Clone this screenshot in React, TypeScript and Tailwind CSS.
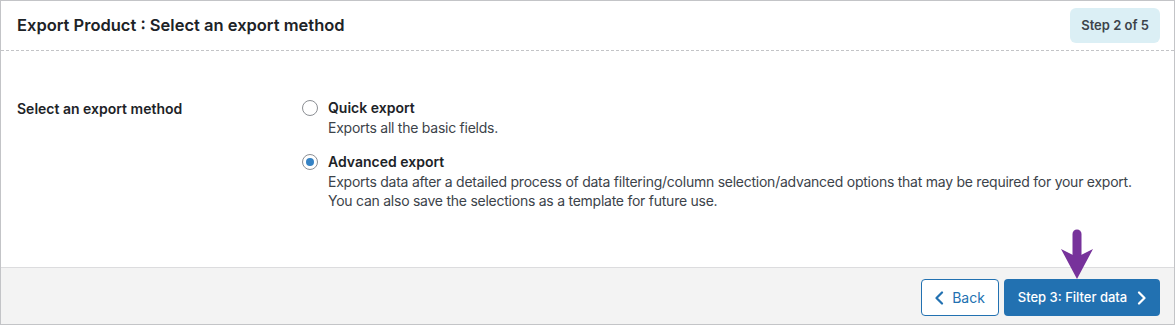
const font = { fontFamily: "Inter, 'Noto Sans', sans-serif" };

function Chevron({ dir }: { dir: "left" | "right" }) {
  return (
    <svg width="9" height="14" viewBox="0 0 9 14" fill="none" stroke="currentColor" strokeWidth="2.2" strokeLinecap="round" strokeLinejoin="round">
      {dir === "right" ? <polyline points="2,1.5 7.5,7 2,12.5" /> : <polyline points="7,1.5 1.5,7 7,12.5" />}
    </svg>
  );
}

function Radio({ checked }: { checked?: boolean }) {
  return (
    <span className="mt-[2px] grid h-4 w-4 shrink-0 place-items-center rounded-full border border-[#8c8f94] bg-white">
      {checked && <span className="h-2 w-2 rounded-full bg-[#3582c4]" />}
    </span>
  );
}

function Option({
  title,
  children,
  checked,
}: {
  title: string;
  children: React.ReactNode;
  checked?: boolean;
}) {
  return (
    <label className="flex gap-[10px]">
      <Radio checked={checked} />
      <div>
        <div className="text-sm font-semibold leading-5 text-[#1d2327]">{title}</div>
        <div className="text-sm leading-[19px] tracking-[-0.25px] text-[#3c434a]">{children}</div>
      </div>
    </label>
  );
}

export default function App() {
  return (
    <div className="relative h-[325px] w-[1175px] bg-white" style={font}>
      <div className="flex h-full flex-col border border-[#c3c4c7]">
        {/* header */}
        <div className="flex h-[50px] items-center justify-between border-b border-dashed border-[#c3c4c7] pl-4 pr-[14px]">
          <h2 className="text-[16.5px] font-semibold text-[#1d2327]">
            Export Product : Select an export method
          </h2>
          <span className="rounded-md bg-[#dbeff5] px-[11px] py-[8px] text-[13px] font-semibold text-[#3c434a]">
            Step 2 of 5
          </span>
        </div>

        {/* body */}
        <div className="flex flex-1 pl-4 pt-[47px]">
          <div className="w-[285px] pt-[1px] text-sm font-semibold leading-5 text-[#1d2327]">
            Select an export method
          </div>
          <div className="flex flex-col gap-[15px]">
            <Option title="Quick export">Exports all the basic fields.</Option>
            <Option title="Advanced export" checked>
              Exports data after a detailed process of data filtering/column selection/advanced options that may be required for your export.
              <br />
              You can also save the selections as a template for future use.
            </Option>
          </div>
        </div>

        {/* footer */}
        <div className="flex h-[57px] items-start justify-end gap-[5px] border-t border-[#dcdcde] bg-[#f3f3f3] pr-[14px] pt-[11px]">
          <button
            type="button"
            className="flex h-[37px] w-[78px] items-center justify-center gap-[8px] rounded border border-[#2271b1] bg-white text-sm text-[#2271b1]"
          >
            <Chevron dir="left" />
            Back
          </button>
          <button
            type="button"
            className="flex h-[37px] w-[156px] items-center justify-center gap-[10px] rounded bg-[#2271b1] text-[13px] font-medium text-white"
          >
            Step 3: Filter data
            <Chevron dir="right" />
          </button>
        </div>
      </div>

      {/* annotation arrow */}
      <svg
        className="absolute left-[1057px] top-[229px]"
        width="40"
        height="52"
        viewBox="0 0 40 52"
      >
        <line x1="20" y1="5" x2="20" y2="34" stroke="#77329b" strokeWidth="9" strokeLinecap="round" />
        <polygon points="4,20 20,28 36,20 20,50" fill="#77329b" />
      </svg>
    </div>
  );
}
